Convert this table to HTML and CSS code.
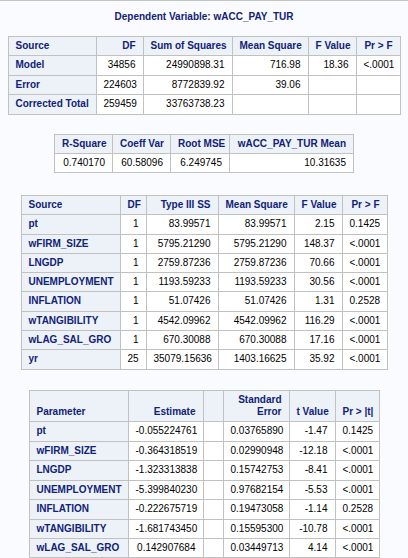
FILE: index.html
```html
<!DOCTYPE html>
<html lang="en">
<head>
<meta charset="utf-8">
<title>Dependent Variable: wACC_PAY_TUR</title>
<link rel="stylesheet" href="styles.css">
</head>
<body>
<main class="output">
  <h1 class="proc-title">Dependent Variable: wACC_PAY_TUR</h1>

  <table class="sas anova">
    <thead>
      <tr><th class="l">Source</th><th>DF</th><th>Sum of Squares</th><th>Mean Square</th><th>F Value</th><th>Pr &gt; F</th></tr>
    </thead>
    <tbody>
      <tr><th class="l">Model</th><td>34856</td><td>24990898.31</td><td>716.98</td><td>18.36</td><td>&lt;.0001</td></tr>
      <tr><th class="l">Error</th><td>224603</td><td>8772839.92</td><td>39.06</td><td></td><td></td></tr>
      <tr><th class="l">Corrected Total</th><td>259459</td><td>33763738.23</td><td></td><td></td><td></td></tr>
    </tbody>
  </table>

  <table class="sas fit">
    <thead>
      <tr><th>R-Square</th><th>Coeff Var</th><th>Root MSE</th><th>wACC_PAY_TUR Mean</th></tr>
    </thead>
    <tbody>
      <tr><td>0.740170</td><td>60.58096</td><td>6.249745</td><td>10.31635</td></tr>
    </tbody>
  </table>

  <table class="sas type3">
    <thead>
      <tr><th class="l">Source</th><th>DF</th><th>Type III SS</th><th>Mean Square</th><th>F Value</th><th>Pr &gt; F</th></tr>
    </thead>
    <tbody>
      <tr><th class="l">pt</th><td>1</td><td>83.99571</td><td>83.99571</td><td>2.15</td><td>0.1425</td></tr>
      <tr><th class="l">wFIRM_SIZE</th><td>1</td><td>5795.21290</td><td>5795.21290</td><td>148.37</td><td>&lt;.0001</td></tr>
      <tr><th class="l">LNGDP</th><td>1</td><td>2759.87236</td><td>2759.87236</td><td>70.66</td><td>&lt;.0001</td></tr>
      <tr><th class="l">UNEMPLOYMENT</th><td>1</td><td>1193.59233</td><td>1193.59233</td><td>30.56</td><td>&lt;.0001</td></tr>
      <tr><th class="l">INFLATION</th><td>1</td><td>51.07426</td><td>51.07426</td><td>1.31</td><td>0.2528</td></tr>
      <tr><th class="l">wTANGIBILITY</th><td>1</td><td>4542.09962</td><td>4542.09962</td><td>116.29</td><td>&lt;.0001</td></tr>
      <tr><th class="l">wLAG_SAL_GRO</th><td>1</td><td>670.30088</td><td>670.30088</td><td>17.16</td><td>&lt;.0001</td></tr>
      <tr><th class="l">yr</th><td>25</td><td>35079.15636</td><td>1403.16625</td><td>35.92</td><td>&lt;.0001</td></tr>
    </tbody>
  </table>

  <table class="sas estimates">
    <thead>
      <tr><th class="l">Parameter</th><th>Estimate</th><th></th><th>Standard<br>Error</th><th>t Value</th><th>Pr &gt; |t|</th></tr>
    </thead>
    <tbody>
      <tr><th class="l">pt</th><td>-0.055224761</td><td></td><td>0.03765890</td><td>-1.47</td><td>0.1425</td></tr>
      <tr><th class="l">wFIRM_SIZE</th><td>-0.364318519</td><td></td><td>0.02990948</td><td>-12.18</td><td>&lt;.0001</td></tr>
      <tr><th class="l">LNGDP</th><td>-1.323313838</td><td></td><td>0.15742753</td><td>-8.41</td><td>&lt;.0001</td></tr>
      <tr><th class="l">UNEMPLOYMENT</th><td>-5.399840230</td><td></td><td>0.97682154</td><td>-5.53</td><td>&lt;.0001</td></tr>
      <tr><th class="l">INFLATION</th><td>-0.222675719</td><td></td><td>0.19473058</td><td>-1.14</td><td>0.2528</td></tr>
      <tr><th class="l">wTANGIBILITY</th><td>-1.681743450</td><td></td><td>0.15595300</td><td>-10.78</td><td>&lt;.0001</td></tr>
      <tr><th class="l">wLAG_SAL_GRO</th><td>0.142907684</td><td></td><td>0.03449713</td><td>4.14</td><td>&lt;.0001</td></tr>
      <tr><th class="l">&nbsp;</th><td></td><td></td><td></td><td></td><td></td></tr>
    </tbody>
  </table>
</main>
</body>
</html>
```

FILE: styles.css
```css
html, body {
  margin: 0;
  padding: 0;
  background: #fafbfe;
}

body {
  font-family: "Liberation Sans", Arial, sans-serif;
  font-size: 10px;
  line-height: 12.4px;
  color: #000;
  height: 558px;
  overflow: hidden;
}

.output {
  border-top: 1px solid #c4c4c4;
  display: flex;
  flex-direction: column;
  align-items: center;
}

.proc-title {
  margin: 10px 0 12.6px;
  font-size: 10px;
  line-height: 12.4px;
  font-weight: bold;
  color: #112277;
  text-align: center;
}

.sas {
  box-sizing: border-box;
  table-layout: fixed;
  border-collapse: separate;
  border-spacing: 0;
  border-top: 1px solid #c1c1c1;
  border-left: 1px solid #c1c1c1;
  background: #fff;
  flex: none;
}

.sas th,
.sas td {
  box-sizing: border-box;
  padding: 3px 7px;
  border-right: 1px solid #c1c1c1;
  border-bottom: 1px solid #c1c1c1;
  white-space: nowrap;
  text-align: right;
  vertical-align: middle;
  line-height: 12.4px;
  font-size: 10px;
}

.sas th {
  background: #edf2f9;
  color: #112277;
  font-weight: bold;
}

.sas td {
  background: #fff;
  color: #000;
  font-weight: normal;
}

.sas .l {
  text-align: left;
}

/* ANOVA table */
.anova { width: 393px; }
.anova th:nth-child(1) { width: 88px; }
.anova th:nth-child(2) { width: 47px; }
.anova th:nth-child(3) { width: 89px; }
.anova th:nth-child(4) { width: 76px; }
.anova th:nth-child(5) { width: 48px; }
.anova th:nth-child(6) { width: 44px; }

/* Fit statistics */
.fit { width: 300px; margin-top: 19.8px; }
.fit th:nth-child(1) { width: 58px; }
.fit th:nth-child(2) { width: 58px; }
.fit th:nth-child(3) { width: 59px; }
.fit th:nth-child(4) { width: 124px; }
.fit th, .fit td { line-height: 12px; }

/* Type III */
.type3 { width: 367px; margin-top: 21.7px; }
.type3 th:nth-child(1) { width: 99px; }
.type3 th:nth-child(2) { width: 26px; }
.type3 th:nth-child(3) { width: 72px; }
.type3 th:nth-child(4) { width: 76px; }
.type3 th:nth-child(5) { width: 48px; }
.type3 th:nth-child(6) { width: 45px; }
.type3 th, .type3 td { line-height: 12.26px; }

/* Parameter estimates */
.estimates { width: 351px; margin-top: 20px; }
.estimates thead th { vertical-align: bottom; }
.estimates th:nth-child(1) { width: 99px; }
.estimates th:nth-child(2) { width: 75px; }
.estimates th:nth-child(3) { width: 20px; }
.estimates th:nth-child(4) { width: 66px; }
.estimates th:nth-child(5) { width: 46px; }
.estimates th:nth-child(6) { width: 44px; }
.estimates th, .estimates td { line-height: 12.43px; }
```
